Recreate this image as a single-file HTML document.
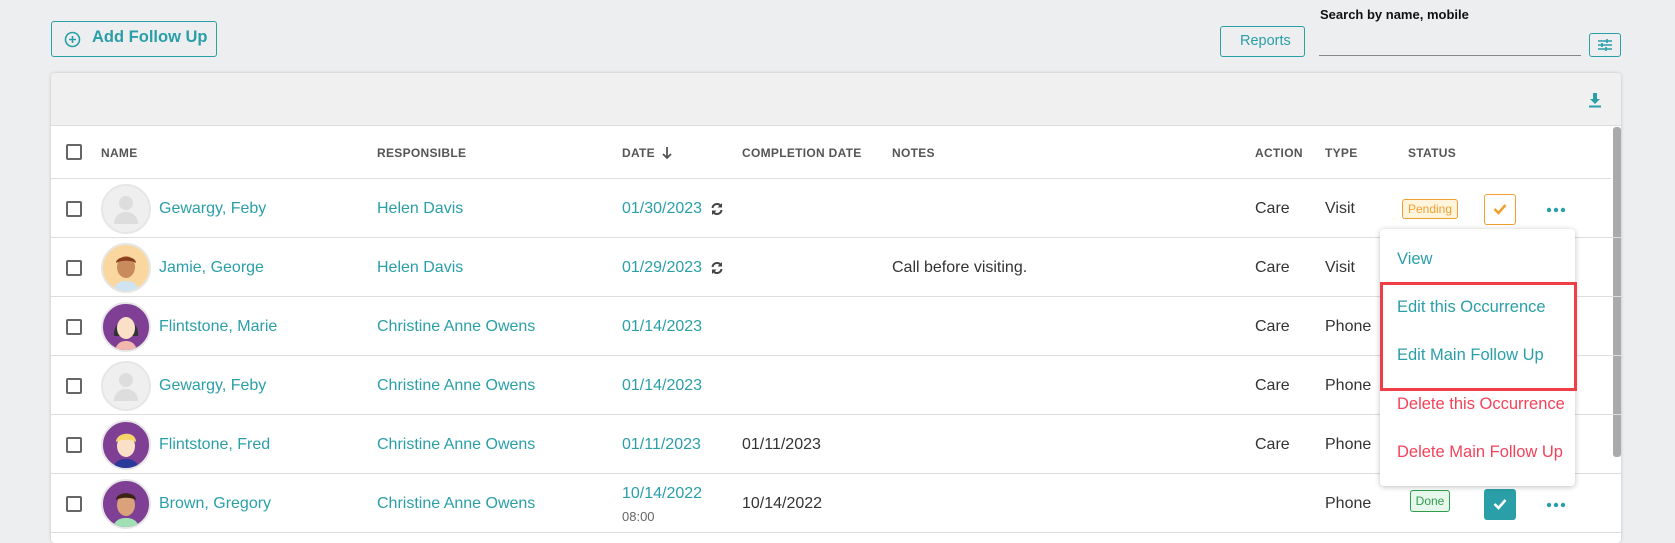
<!DOCTYPE html>
<html><head><style>
*{box-sizing:border-box;margin:0;padding:0}
body{width:1675px;height:534px;overflow:hidden;background:#edeeef;font-family:"Liberation Sans",Arial,sans-serif;position:relative;color:#333}
.a{position:absolute}
.teal{color:#2a9fa8}
.btn{border:1px solid #2a9fa8;border-radius:3px;background:transparent}
.card{left:51px;top:73px;width:1570px;height:470px;background:#fff;border-radius:4px;box-shadow:0 0 3px rgba(0,0,0,.2);overflow:hidden}
.tb{left:0;top:0;width:1570px;height:53px;background:#f0f0f0;border-bottom:1px solid #ddd}
.hd{font-size:12px;font-weight:bold;color:#555;letter-spacing:.3px}
.cb{width:16px;height:16px;border:2px solid #666;border-radius:2px}
.row{left:0;width:1570px;height:59px;border-bottom:1px solid #ddd}
.av{width:50px;height:50px;border-radius:50%;border:2px solid #e6e6e6;overflow:hidden}
.t{font-size:16px}
.m{font-size:16px;color:#2a9fa8}
.dots{width:20px;height:6px}
</style></head><body>
<div class="a btn" style="left:51px;top:21px;width:166px;height:36px"></div>
<svg class="a" style="left:64px;top:31px" width="17" height="17" viewBox="0 0 17 17"><circle cx="8.5" cy="8.5" r="7" fill="none" stroke="#2a9fa8" stroke-width="1.6"/><path d="M8.5 5v7M5 8.5h7" stroke="#2a9fa8" stroke-width="1.6"/></svg>
<div class="a teal" style="left:92px;top:28px;font-size:16.5px;font-weight:bold">Add Follow Up</div>
<div class="a btn" style="left:1220px;top:26px;width:85px;height:31px"></div>
<div class="a teal" style="left:1240px;top:33px;font-size:14.5px">Reports</div>
<div class="a" style="left:1320px;top:7px;font-size:13px;font-weight:bold;color:#111">Search by name, mobile</div>
<div class="a" style="left:1319px;top:55px;width:262px;height:1px;background:#888"></div>
<div class="a btn" style="left:1589px;top:33px;width:32px;height:24px"></div>
<svg class="a" style="left:1597px;top:38px" width="16" height="14" viewBox="0 0 16 14"><path d="M1 3h14M1 7h14M1 11h14" stroke="#2a9fa8" stroke-width="1.4"/><path d="M10 1v4M5 5v4M9 9v4" stroke="#2a9fa8" stroke-width="1.6"/></svg>
<div class="a card">
<div class="a tb"></div>
<svg class="a" style="left:1537px;top:20px" width="14" height="15" viewBox="0 0 14 15"><path d="M5 0h4v6h3L7 11 2 6h3z" fill="#2a9fa8"/><rect x="1" y="12.5" width="12" height="2" fill="#2a9fa8"/></svg>
<div class="a" style="left:1562px;top:54px;width:8px;height:330px;background:#aaa;border-radius:3px"></div>
<div class="a" style="left:0;top:54px;width:1560px;height:52px;border-bottom:1px solid #ddd"></div>
<div class="a cb" style="left:15px;top:71px"></div>
<div class="a hd" style="left:50px;top:73px">NAME</div>
<div class="a hd" style="left:326px;top:73px">RESPONSIBLE</div>
<div class="a hd" style="left:571px;top:73px">DATE</div>
<svg class="a" style="left:610px;top:73px" width="12" height="14" viewBox="0 0 12 14"><path d="M6 1v11M2 8l4 4 4-4" fill="none" stroke="#555" stroke-width="1.8"/></svg>
<div class="a hd" style="left:691px;top:73px">COMPLETION DATE</div>
<div class="a hd" style="left:841px;top:73px">NOTES</div>
<div class="a hd" style="left:1204px;top:73px">ACTION</div>
<div class="a hd" style="left:1274px;top:73px">TYPE</div>
<div class="a hd" style="left:1357px;top:73px">STATUS</div>
</div>
<div class="a" style="left:51px;top:179px;width:1561px;height:355px">
 <div class="a row" style="top:0"></div><div class="a row" style="top:59px"></div><div class="a row" style="top:118px"></div><div class="a row" style="top:177px"></div><div class="a row" style="top:236px"></div><div class="a row" style="top:295px"></div>
</div>
<div class="a cb" style="left:66px;top:201px"></div><div class="a cb" style="left:66px;top:260px"></div><div class="a cb" style="left:66px;top:319px"></div><div class="a cb" style="left:66px;top:378px"></div><div class="a cb" style="left:66px;top:437px"></div><div class="a cb" style="left:66px;top:496px"></div>
<div class="a av" style="left:101px;top:184px;background:#efefef"><svg width="46" height="46" viewBox="0 0 46 46"><circle cx="23" cy="17" r="7" fill="#ddd"/><path d="M11 38c0-8 6-12 12-12s12 4 12 12z" fill="#ddd"/></svg></div>
<div class="a av" style="left:101px;top:243px;background:#fbd7a0"><svg width="46" height="46" viewBox="0 0 46 46"><path d="M10 46c2-8 7-10 13-10s11 2 13 10z" fill="#cfe4f0"/><ellipse cx="23" cy="22" rx="9" ry="11" fill="#c98a5c"/><path d="M13 18c0-8 20-8 20 0-4-3-16-3-20 0z" fill="#8a3f1c"/></svg></div>
<div class="a av" style="left:101px;top:302px;background:#7e3f95"><svg width="46" height="46" viewBox="0 0 46 46"><path d="M11 32c-2-20 26-20 24 0z" fill="#333"/><ellipse cx="23" cy="24" rx="9" ry="11" fill="#fbe0c8"/><path d="M12 46c2-7 6-9 11-9s9 2 11 9z" fill="#f2b7ad"/></svg></div>
<div class="a av" style="left:101px;top:361px;background:#efefef"><svg width="46" height="46" viewBox="0 0 46 46"><circle cx="23" cy="17" r="7" fill="#ddd"/><path d="M11 38c0-8 6-12 12-12s12 4 12 12z" fill="#ddd"/></svg></div>
<div class="a av" style="left:101px;top:420px;background:#7e3f95"><svg width="46" height="46" viewBox="0 0 46 46"><path d="M10 46c2-7 7-9 13-9s11 2 13 9z" fill="#2a3a9a"/><ellipse cx="23" cy="24" rx="9" ry="11" fill="#fbe0c8"/><path d="M13 20c0-10 20-12 20 0-5-3-15-3-20 0z" fill="#f4d66a"/></svg></div>
<div class="a av" style="left:101px;top:479px;background:#7e3f95"><svg width="46" height="46" viewBox="0 0 46 46"><path d="M10 46c2-7 7-9 13-9s11 2 13 9z" fill="#9fe0b5"/><ellipse cx="23" cy="24" rx="9" ry="11" fill="#d9a27a"/><path d="M13 19c0-9 20-9 20 0-5-3-15-3-20 0z" fill="#3a2414"/></svg></div>
<div class="a m" style="left:159px;top:200px">Gewargy, Feby</div>
<div class="a m" style="left:159px;top:259px">Jamie, George</div>
<div class="a m" style="left:159px;top:318px">Flintstone, Marie</div>
<div class="a m" style="left:159px;top:377px">Gewargy, Feby</div>
<div class="a m" style="left:159px;top:436px">Flintstone, Fred</div>
<div class="a m" style="left:159px;top:495px">Brown, Gregory</div>
<div class="a m" style="left:377px;top:200px">Helen Davis</div>
<div class="a m" style="left:377px;top:259px">Helen Davis</div>
<div class="a m" style="left:377px;top:318px">Christine Anne Owens</div>
<div class="a m" style="left:377px;top:377px">Christine Anne Owens</div>
<div class="a m" style="left:377px;top:436px">Christine Anne Owens</div>
<div class="a m" style="left:377px;top:495px">Christine Anne Owens</div>
<div class="a m" style="left:622px;top:200px">01/30/2023</div>
<div class="a m" style="left:622px;top:259px">01/29/2023</div>
<svg class="a" style="left:710px;top:202px" width="14" height="14" viewBox="0 0 14 14"><path d="M2.5 6a4.5 4.5 0 0 1 8.3-1.8M11.5 8a4.5 4.5 0 0 1-8.3 1.8" fill="none" stroke="#444" stroke-width="2"/><path d="M12 1v4.5H7.5zM2 13V8.5h4.5z" fill="#444"/></svg>
<svg class="a" style="left:710px;top:261px" width="14" height="14" viewBox="0 0 14 14"><path d="M2.5 6a4.5 4.5 0 0 1 8.3-1.8M11.5 8a4.5 4.5 0 0 1-8.3 1.8" fill="none" stroke="#444" stroke-width="2"/><path d="M12 1v4.5H7.5zM2 13V8.5h4.5z" fill="#444"/></svg>
<div class="a m" style="left:622px;top:318px">01/14/2023</div>
<div class="a m" style="left:622px;top:377px">01/14/2023</div>
<div class="a m" style="left:622px;top:436px">01/11/2023</div>
<div class="a m" style="left:622px;top:485px">10/14/2022</div>
<div class="a" style="left:622px;top:509px;font-size:13px;color:#666">08:00</div>
<div class="a t" style="left:742px;top:436px">01/11/2023</div>
<div class="a t" style="left:742px;top:495px">10/14/2022</div>
<div class="a t" style="left:892px;top:259px">Call before visiting.</div>
<div class="a t" style="left:1255px;top:200px">Care</div><div class="a t" style="left:1255px;top:259px">Care</div><div class="a t" style="left:1255px;top:318px">Care</div><div class="a t" style="left:1255px;top:377px">Care</div><div class="a t" style="left:1255px;top:436px">Care</div>
<div class="a t" style="left:1325px;top:200px">Visit</div><div class="a t" style="left:1325px;top:259px">Visit</div><div class="a t" style="left:1325px;top:318px">Phone</div><div class="a t" style="left:1325px;top:377px">Phone</div><div class="a t" style="left:1325px;top:436px">Phone</div><div class="a t" style="left:1325px;top:495px">Phone</div>
<div class="a" style="left:1402px;top:199px;width:56px;height:20px;border:1px solid #f0a030;background:#fff4dc;border-radius:3px;color:#f0a030;font-size:12px;text-align:center;line-height:18px">Pending</div>
<div class="a" style="left:1484px;top:194px;width:32px;height:31px;border:1px solid #f0a030;border-radius:3px"></div>
<svg class="a" style="left:1493px;top:203px" width="14" height="12" viewBox="0 0 14 12"><path d="M1.5 6l4 4 7-8" fill="none" stroke="#f0a030" stroke-width="2.6"/></svg>
<svg class="a dots" style="left:1546px;top:207px" viewBox="0 0 20 6"><circle cx="3" cy="3" r="2.2" fill="#2a9fa8"/><circle cx="10" cy="3" r="2.2" fill="#2a9fa8"/><circle cx="17" cy="3" r="2.2" fill="#2a9fa8"/></svg>
<div class="a" style="left:1410px;top:490px;width:40px;height:22px;border:1px solid #2e9e4a;background:#e8f7ec;border-radius:3px;color:#2e9e4a;font-size:12px;text-align:center;line-height:20px">Done</div>
<div class="a" style="left:1484px;top:489px;width:32px;height:31px;background:#2a9fa8;border-radius:3px"></div>
<svg class="a" style="left:1493px;top:498px" width="14" height="12" viewBox="0 0 14 12"><path d="M1.5 6l4 4 7-8" fill="none" stroke="#fff" stroke-width="2.6"/></svg>
<svg class="a dots" style="left:1546px;top:502px" viewBox="0 0 20 6"><circle cx="3" cy="3" r="2.2" fill="#2a9fa8"/><circle cx="10" cy="3" r="2.2" fill="#2a9fa8"/><circle cx="17" cy="3" r="2.2" fill="#2a9fa8"/></svg>
<div class="a" style="left:1380px;top:229px;width:195px;height:257px;background:#fff;border-radius:4px;box-shadow:0 1px 6px rgba(0,0,0,.25)"></div>
<div class="a teal" style="left:1397px;top:250px;font-size:16.5px">View</div>
<div class="a teal" style="left:1397px;top:298px;font-size:16.5px">Edit this Occurrence</div>
<div class="a teal" style="left:1397px;top:346px;font-size:16.5px">Edit Main Follow Up</div>
<div class="a" style="left:1397px;top:395px;font-size:16.5px;color:#f2435a">Delete this Occurrence</div>
<div class="a" style="left:1397px;top:443px;font-size:16.5px;color:#f2435a">Delete Main Follow Up</div>
<div class="a" style="left:1380px;top:282px;width:197px;height:109px;border:3px solid #ef3e45"></div>
</body></html>
